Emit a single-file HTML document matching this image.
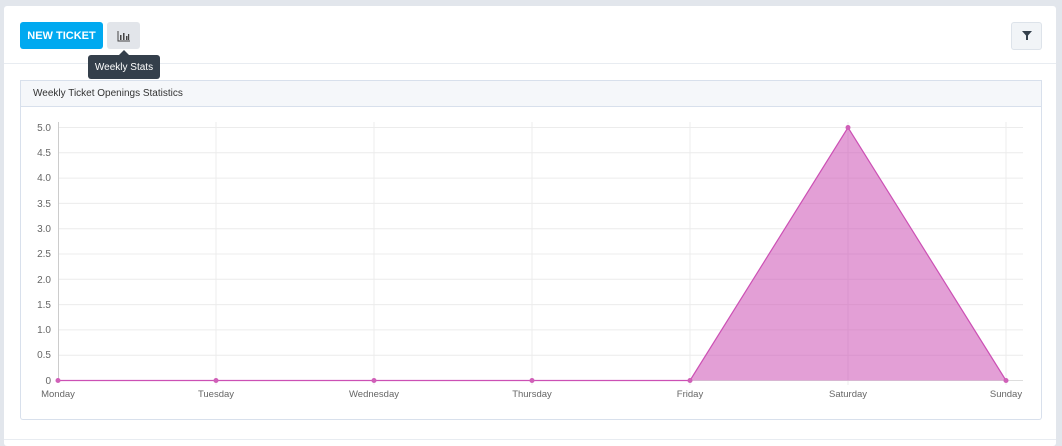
<!DOCTYPE html>
<html><head><style>
body{margin:0;width:1062px;height:442px;background:#e2e6ec;font-family:"Liberation Sans",sans-serif;overflow:hidden;position:relative}
.card{position:absolute;left:4px;top:6px;width:1052px;height:440px;background:#fff;border-radius:3px}
.btn{position:absolute;top:22px;height:27px;border-radius:3px;font-size:11px;font-weight:bold;color:#fff;line-height:28px;text-align:center}
.tip{position:absolute;left:88px;top:55px;width:72px;height:24px;background:#343f4b;border-radius:3px;color:#fff;font-size:10px;line-height:25px;text-align:center;z-index:5}
.tip:before{content:"";position:absolute;left:31px;top:-5px;border:5px solid transparent;border-top:0;border-bottom-color:#343f4b}
</style></head><body>
<div class="card"></div>
<div class="btn" style="left:20px;width:83px;background:#00a9f0">NEW TICKET</div>
<div class="btn" style="left:107px;width:33px;background:#e2e5ea">
<svg width="14" height="12" viewBox="0 0 14 12" style="margin-top:8px"><path d="M1 1V11H13" stroke="#444" fill="none"/><rect x="3" y="5" width="1.5" height="5" fill="#444"/><rect x="6" y="3" width="1.5" height="7" fill="#444"/><rect x="9" y="6" width="1.5" height="4" fill="#444"/><rect x="11" y="4" width="1.2" height="6" fill="#444"/></svg></div>
<div class="btn" style="left:1011px;width:29px;height:26px;background:#f1f4f7;border:1px solid #dde3ea">
<svg width="10" height="10" viewBox="0 0 10 10" style="margin-top:8px"><path d="M0 0H10L6 4.5V9H4V4.5Z" fill="#34404c"/></svg></div>
<div style="position:absolute;left:4px;top:63px;width:1052px;height:1px;background:#e8ecf1"></div>
<div class="tip">Weekly Stats</div>
<div style="position:absolute;left:20px;top:80px;border:1px solid #d8e0ec;background:#f5f7fa;font-size:10px;color:#333;line-height:25px;padding-left:12px;box-sizing:border-box;width:1022px;height:27px">Weekly Ticket Openings Statistics</div>
<div style="position:absolute;left:20px;top:106px;width:1022px;height:314px;border:1px solid #d8e0ec;border-top:none;border-radius:0 0 3px 3px;box-sizing:border-box"></div>
<div style="position:absolute;left:4px;top:439px;width:1052px;height:1px;background:#e8ecf1"></div>
<svg style="position:absolute;left:0;top:0" width="1062" height="442" font-family="Liberation Sans" font-size="10" fill="#666">
<g stroke="#ececec">
<line x1="58" y1="127.5" x2="1023" y2="127.5"/><line x1="58" y1="152.8" x2="1023" y2="152.8"/><line x1="58" y1="178.1" x2="1023" y2="178.1"/><line x1="58" y1="203.4" x2="1023" y2="203.4"/><line x1="58" y1="228.7" x2="1023" y2="228.7"/><line x1="58" y1="254" x2="1023" y2="254"/><line x1="58" y1="279.3" x2="1023" y2="279.3"/><line x1="58" y1="304.6" x2="1023" y2="304.6"/><line x1="58" y1="329.9" x2="1023" y2="329.9"/><line x1="58" y1="355.2" x2="1023" y2="355.2"/>
<line x1="216" y1="122" x2="216" y2="385"/><line x1="374" y1="122" x2="374" y2="385"/><line x1="532" y1="122" x2="532" y2="385"/><line x1="690" y1="122" x2="690" y2="385"/><line x1="848" y1="122" x2="848" y2="385"/><line x1="1006" y1="122" x2="1006" y2="385"/>
</g>
<line x1="58.5" y1="122" x2="58.5" y2="381" stroke="#ccc"/>
<line x1="58" y1="380.5" x2="1023" y2="380.5" stroke="#ddd"/>
<g text-anchor="end"><text x="51" y="131">5.0</text><text x="51" y="156">4.5</text><text x="51" y="181">4.0</text><text x="51" y="207">3.5</text><text x="51" y="232">3.0</text><text x="51" y="257">2.5</text><text x="51" y="283">2.0</text><text x="51" y="308">1.5</text><text x="51" y="333">1.0</text><text x="51" y="358">0.5</text><text x="51" y="384">0</text></g>
<g text-anchor="middle" font-size="9.5"><text x="58" y="397">Monday</text><text x="216" y="397">Tuesday</text><text x="374" y="397">Wednesday</text><text x="532" y="397">Thursday</text><text x="690" y="397">Friday</text><text x="848" y="397">Saturday</text><text x="1006" y="397">Sunday</text></g>
<path d="M690 380.5L848 127.5L1006 380.5Z" fill="rgba(204,80,180,0.55)"/>
<path d="M58 380.5H690L848 127.5L1006 380.5" stroke="#cc50b4" stroke-width="1.2" fill="none"/>
<g fill="#d060b8"><circle cx="58" cy="380.5" r="2.5"/><circle cx="216" cy="380.5" r="2.5"/><circle cx="374" cy="380.5" r="2.5"/><circle cx="532" cy="380.5" r="2.5"/><circle cx="690" cy="380.5" r="2.5"/><circle cx="848" cy="127.5" r="2.5"/><circle cx="1006" cy="380.5" r="2.5"/></g>
</svg>
</body></html>
